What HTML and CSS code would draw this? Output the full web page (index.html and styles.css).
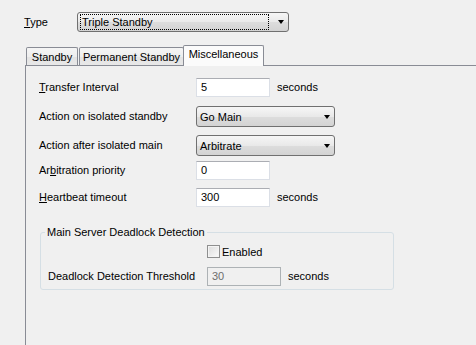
FILE: index.html
```html
<!DOCTYPE html>
<html>
<head>
<meta charset="utf-8">
<link rel="stylesheet" href="styles.css">
</head>
<body>
<div class="top">
  <span class="type-label"><u>T</u>ype</span>
  <div class="combo combo-type"><span class="focus">Triple Standby</span><span class="arrow"></span></div>
</div>
<div class="tabs">
  <div class="tab tab-standby">Standby</div>
  <div class="tab tab-perm">Permanent Standby</div>
  <div class="tab active">Miscellaneous</div>
</div>
<div class="panel">
  <div class="form">
    <span class="lbl"><u>T</u>ransfer Interval</span>
    <div class="ctl"><div class="input">5</div><span class="unit">seconds</span></div>

    <span class="lbl lbl-combo">Action on isolated standby</span>
    <div class="ctl"><div class="combo combo-small"><span class="val">Go Main</span><span class="arrow"></span></div></div>

    <span class="lbl lbl-combo">Action after isolated main</span>
    <div class="ctl"><div class="combo combo-small"><span class="val">Arbitrate</span><span class="arrow"></span></div></div>

    <span class="lbl">Ar<u>b</u>itration priority</span>
    <div class="ctl"><div class="input">0</div></div>

    <span class="lbl"><u>H</u>eartbeat timeout</span>
    <div class="ctl"><div class="input">300</div><span class="unit">seconds</span></div>
  </div>

  <fieldset class="group">
    <legend>Main Server Deadlock Detection</legend>
    <div class="group-grid">
      <span></span>
      <div class="ctl"><span class="check"></span><span class="check-label">Enabled</span></div>
      <span class="lbl">Deadlock Detection Threshold</span>
      <div class="ctl"><div class="input disabled">30</div><span class="unit unit-g">seconds</span></div>
    </div>
  </fieldset>
</div>
</body>
</html>
```

FILE: styles.css
```css
html, body {
  margin: 0;
  padding: 0;
  background: #f0f0f0;
  overflow: hidden;
}
body {
  width: 476px;
  height: 345px;
  font-family: "Liberation Sans", Arial, sans-serif;
  font-size: 11px;
  color: #000;
}
u { text-decoration: underline; text-underline-offset: 1px; }

.top {
  display: flex;
  align-items: center;
  padding: 12px 0 0 24px;
  height: 20px;
}
.type-label {
  width: 53px;
}

.combo {
  box-sizing: border-box;
  display: flex;
  align-items: center;
  border: 1px solid #707070;
  border-radius: 3px;
  background: linear-gradient(#f6f6f6, #e9e9e9 50%, #dddddd 51%, #d3d3d3);
  position: relative;
}
.combo-type {
  width: 212px;
  height: 20px;
  padding-left: 2px;
}
.focus {
  box-sizing: border-box;
  width: 189px;
  height: 16px;
  border: 1px dotted #000;
  line-height: 14px;
  padding-left: 1px;
}
.arrow {
  width: 0;
  height: 0;
  border-left: 3.5px solid transparent;
  border-right: 3.5px solid transparent;
  border-top: 4px solid #000;
  margin-left: auto;
  margin-right: 4px;
}

.tabs {
  display: flex;
  align-items: flex-end;
  margin: 13px 0 0 26px;
  height: 20px;
  position: relative;
  z-index: 2;
}
.tab {
  box-sizing: border-box;
  height: 18px;
  border: 1px solid #898c95;
  border-bottom: none;
  background: linear-gradient(#f5f5f5, #eeeeee 50%, #e3e3e3 51%, #e8e8e8);
  text-align: center;
  line-height: 18px;
  border-radius: 2px 2px 0 0;
}
.tab-standby { width: 52px; }
.tab-perm { width: 105px; margin-left: 1px; }
.tab.active {
  width: 81px;
  height: 21px;
  margin-bottom: -1px;
  background: #fbfbfb;
  line-height: 17px;
  margin-left: -1px;
}

.panel {
  box-sizing: border-box;
  margin-left: 25px;
  width: 451px;
  height: 280px;
  border-top: 1px solid #898c95;
  border-left: 1px solid #898c95;
  padding: 12px 0 0 13px;
  position: relative;
  z-index: 1;
}

.form {
  display: grid;
  grid-template-columns: 157px auto;
  grid-template-rows: 28px 29px 26px 27px 20px;
  align-items: start;
}
.lbl {
  line-height: 19px;
}
.lbl-combo { line-height: 21px; }
.ctl {
  display: flex;
  align-items: center;
}

.input {
  box-sizing: border-box;
  width: 74px;
  height: 19px;
  background: #fff;
  border: 1px solid #dbdfe6;
  border-top-color: #abadb3;
  padding-left: 4px;
  line-height: 17px;
}
.input.disabled {
  background: #f0f0f0;
  border-color: #adb2b5;
  color: #6d6d6d;
}
.unit {
  margin-left: 7px;
  line-height: 19px;
}
.unit-g { margin-left: 7px; }

.combo-small {
  width: 139px;
  height: 21px;
  padding-left: 3px;
}

.group {
  box-sizing: border-box;
  margin: 18px 0 0 1px;
  padding: 0;
  width: 354px;
  border: 1px solid #d5dfe5;
  border-radius: 3px;
}
.group legend {
  margin-left: 4px;
  padding: 0 2px;
  line-height: 13px;
}
.group-grid {
  display: grid;
  grid-template-columns: 159px auto;
  grid-template-rows: 13px 19px;
  row-gap: 9px;
  padding: 6px 0 3px 7px;
  align-items: center;
}
.check {
  box-sizing: border-box;
  width: 13px;
  height: 13px;
  border: 1px solid #8e8f8f;
  background: linear-gradient(135deg, #dcdcdc, #fbfbfb);
  box-shadow: inset 0 0 0 1px #f4f4f4;
}
.check-label {
  margin-left: 2px;
}
```
